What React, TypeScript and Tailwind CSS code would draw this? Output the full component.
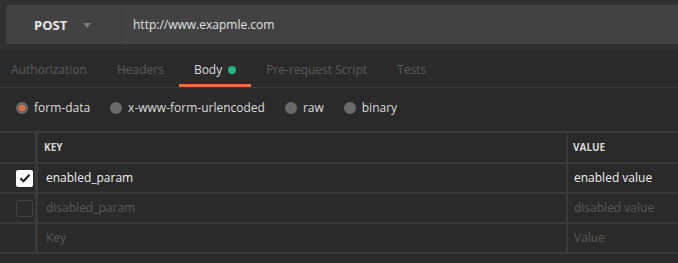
import React from "react";

const tabs = ["Authorization", "Headers", "Body", "Pre-request Script", "Tests"];
const modes = ["form-data", "x-www-form-urlencoded", "raw", "binary"];

const rows = [
  { key: "enabled_param", value: "enabled value", state: "on" },
  { key: "disabled_param", value: "disabled value", state: "off" },
  { key: "Key", value: "Value", state: "empty" },
];

const App = () => {
  return (
    <div className="w-[678px] h-[263px] overflow-hidden bg-[#2a2a2a] font-['Open_Sans',sans-serif]">
      {/* request bar */}
      <div className="bg-[#303030] pt-[5px] pb-[6px] pl-[6px]">
        <div className="flex h-[39px] bg-[#424242] rounded-l-[3px] border-t border-[#484848]">
          <div className="flex items-center w-[116px] border-r border-[#3a3a3a] pl-[28px] pt-[1px]">
            <span className="text-[13px] font-bold text-[#e6e6e6]">POST</span>
            <svg className="ml-[16px]" width="8" height="5" viewBox="0 0 8 5">
              <path d="M0 0h8L4 5z" fill="#7a7a7a" />
            </svg>
          </div>
          <div className="flex items-center pl-[11px] text-[12px] text-[#e0e0e0]">
            http://www.exapmle.com
          </div>
        </div>
      </div>

      {/* tabs */}
      <div className="flex h-[38px] border-b border-[#3a3a3a] ml-[-4px]">
        {tabs.map((t) => {
          const active = t === "Body";
          return (
            <div
              key={t}
              className={
                "relative flex items-center px-[15px] pt-[2px] text-[12px] " +
                (active ? "text-[#dcdcdc]" : "text-[#5c5c5c]")
              }
            >
              {t}
              {active && <span className="ml-[6px] w-[8px] h-[8px] rounded-full bg-[#26b47f]" />}
              {active && <span className="absolute left-0 right-0 bottom-0 h-[3px] bg-[#f26b3a]" />}
            </div>
          );
        })}
      </div>

      {/* body modes */}
      <div className="flex items-center h-[43px] pb-[3px] pl-[16px] gap-[20px]">
        {modes.map((m, i) => (
          <div key={m} className="flex items-center gap-[6px]">
            <span className="flex items-center justify-center w-[12px] h-[12px] rounded-full bg-[#6a6a6a]">
              {i === 0 && <span className="w-[6px] h-[6px] rounded-full bg-[#f26b3a]" />}
            </span>
            <span className="text-[12px] text-[#dcdcdc]">{m}</span>
          </div>
        ))}
      </div>

      {/* key / value table */}
      <div className="border-t-2 border-[#3a3a3a]">
        <div className="flex h-[31px] border-b-2 border-[#3a3a3a]">
          <div className="w-[38px] border-r-[3px] border-[#3a3a3a]" />
          <div className="flex items-center w-[528px] pl-[6px] text-[10px] font-bold text-[#d8d8d8]">KEY</div>
          <div className="flex items-center flex-1 border-l-2 border-[#3a3a3a] pl-[5px] text-[10px] font-bold text-[#d8d8d8]">
            VALUE
          </div>
        </div>
        {rows.map((r) => (
          <div key={r.key} className="flex h-[30px] border-b-2 border-[#3a3a3a]">
            <div className="flex items-center justify-end w-[38px] border-r-[3px] border-[#3a3a3a] pr-[2px]">
              {r.state === "on" && (
                <span className="flex items-center justify-center w-[17px] h-[17px] rounded-[2px] bg-white">
                  <svg width="12" height="10" viewBox="0 0 12 10">
                    <path d="M1.5 5.2l3 3L10.5 1.8" fill="none" stroke="#222" strokeWidth="2.2" />
                  </svg>
                </span>
              )}
              {r.state === "off" && (
                <span className="w-[17px] h-[17px] rounded-[3px] border border-[#444]" />
              )}
            </div>
            <div
              className={
                "flex items-center w-[528px] pl-[8px] text-[12px] " +
                (r.state === "on" ? "text-[#eeeeee]" : "text-[#5a5a5a]")
              }
            >
              {r.key}
            </div>
            <div
              className={
                "flex items-center flex-1 border-l-2 border-[#3a3a3a] pl-[6px] text-[12px] " +
                (r.state === "on" ? "text-[#eeeeee]" : "text-[#5a5a5a]")
              }
            >
              {r.value}
            </div>
          </div>
        ))}
      </div>
    </div>
  );
};

export default App;
